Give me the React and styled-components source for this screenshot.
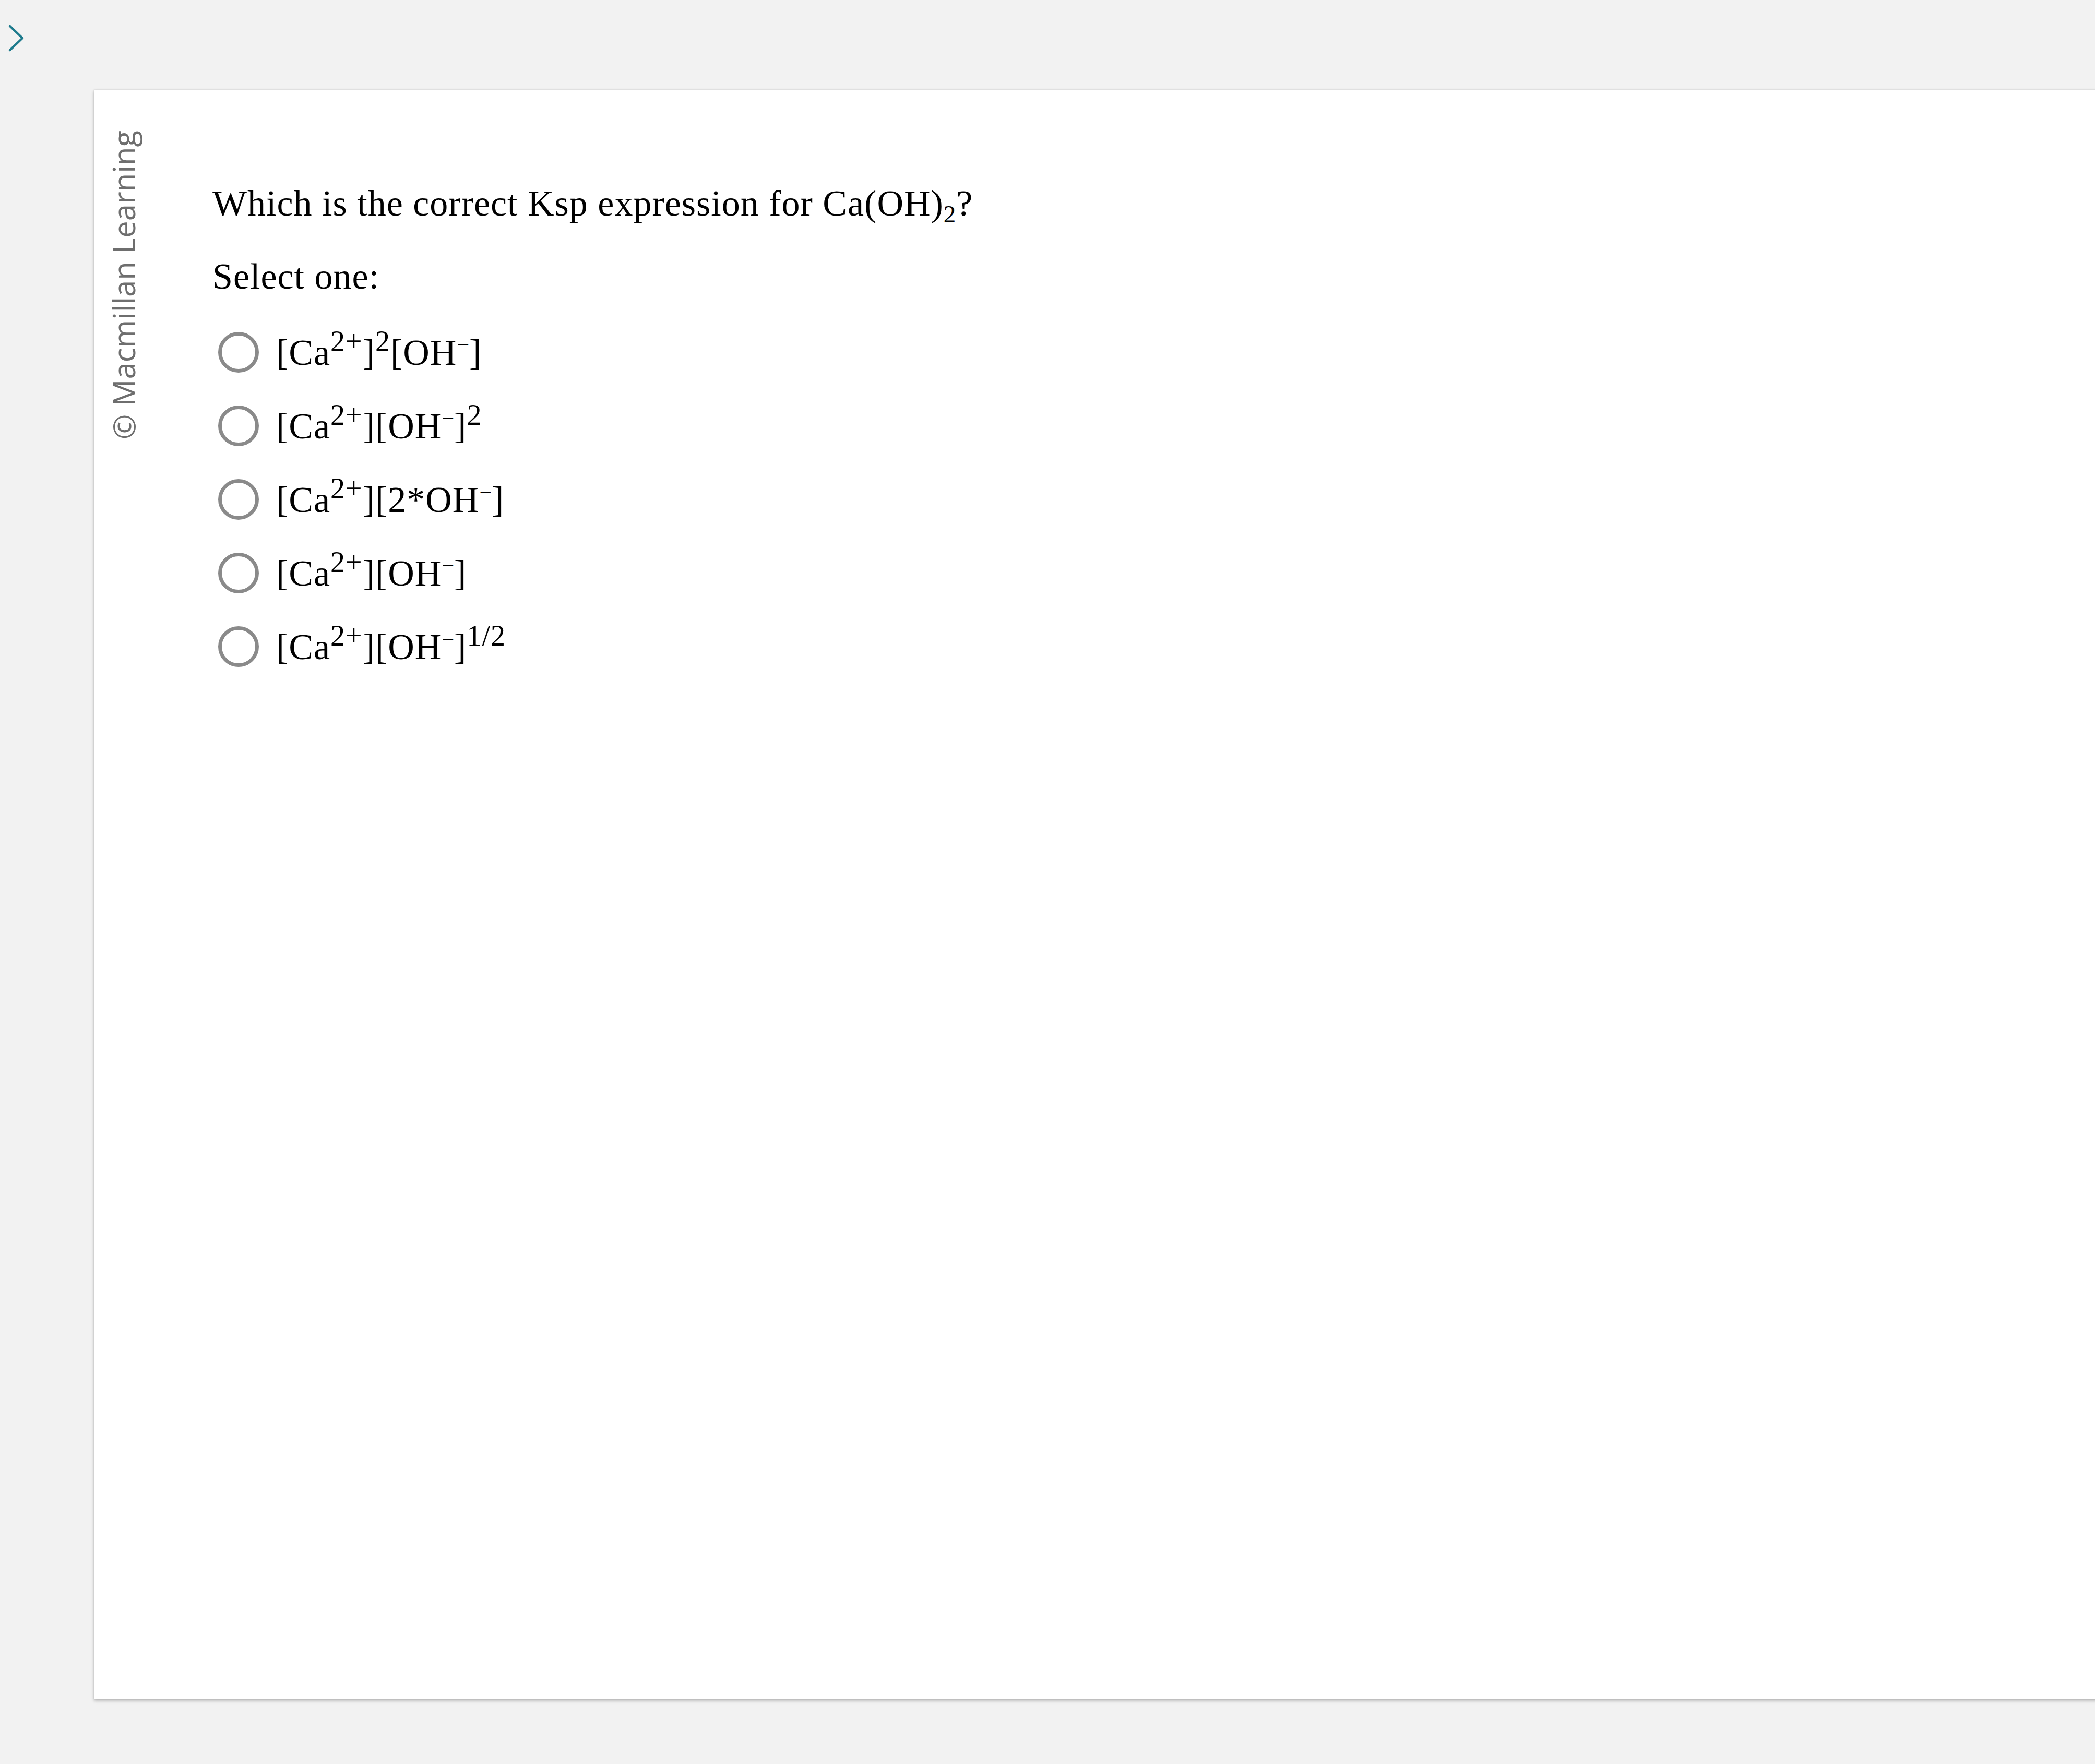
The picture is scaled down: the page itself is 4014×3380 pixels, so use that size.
import React from 'react';
import styled, { createGlobalStyle } from 'styled-components';

const GlobalStyle = createGlobalStyle`
  html, body {
    margin: 0;
    padding: 0;
    background: #f2f2f2;
    overflow: hidden;
  }
`;

const Page = styled.div`
  display: flex;
  flex-direction: column;
  height: 3380px;
`;

const TopBar = styled.header`
  height: 172px;
  box-sizing: border-box;
  padding: 46px 0 0 15px;
`;

const Card = styled.main`
  display: flex;
  margin-left: 180px;
  width: 3900px;
  height: 3084px;
  background: #fff;
  box-shadow: 0 3px 6px rgba(0, 0, 0, 0.22), 0 0 3px rgba(0, 0, 0, 0.12);
`;

const Credit = styled.div`
  align-self: flex-start;
  margin: 78px 0 0 28px;
  writing-mode: vertical-rl;
  text-orientation: sideways;
  transform: rotate(180deg);
  white-space: nowrap;
  font-family: "Open Sans", sans-serif;
  font-size: 58px;
  line-height: 58px;
  color: #6e6e6e;
`;

const Content = styled.section`
  padding: 180px 0 0 141px;
  font-family: "Liberation Serif", "Times New Roman", serif;
  font-size: 70px;
  line-height: 75px;
  letter-spacing: 1px;
  color: #000;
`;

const Prompt = styled.p`
  margin: 0;
`;

const SelectLabel = styled.p`
  margin: 65px 0 0;
`;

const Options = styled.div`
  display: flex;
  flex-direction: column;
  gap: 63px;
  margin-top: 69px;
  padding-left: 11px;
`;

const Option = styled.label`
  display: flex;
  align-items: center;
  gap: 33px;
  cursor: pointer;
`;

const Radio = styled.span`
  flex: none;
  width: 78px;
  height: 78px;
  box-sizing: border-box;
  border: 7px solid #8a8a8a;
  border-radius: 50%;
`;

const Sup = styled.sup`
  font-size: 56px;
  line-height: 0;
  vertical-align: 26px;
`;

const Minus = styled.sup`
  font-size: 42px;
  line-height: 0;
  vertical-align: 24px;
  letter-spacing: 0;
`;

const Sub = styled.sub`
  font-size: 47px;
  line-height: 0;
  vertical-align: -13px;
`;

const Chevron = () => (
  <svg width="32" height="54" viewBox="0 0 32 54">
    <polyline
      points="4,4 28,27 4,50"
      fill="none"
      stroke="#1d7a8c"
      strokeWidth="4.5"
      strokeLinecap="round"
      strokeLinejoin="round"
    />
  </svg>
);

const Ca = () => (
  <>
    [Ca<Sup>2+</Sup>]
  </>
);

const OH = ({ coef }) => (
  <>
    [{coef}OH<Minus>−</Minus>]
  </>
);

const choices = [
  <>
    <Ca />
    <Sup>2</Sup>
    <OH />
  </>,
  <>
    <Ca />
    <OH />
    <Sup>2</Sup>
  </>,
  <>
    <Ca />
    <OH coef="2*" />
  </>,
  <>
    <Ca />
    <OH />
  </>,
  <>
    <Ca />
    <OH />
    <Sup>1/2</Sup>
  </>,
];

export default function App() {
  return (
    <Page>
      <GlobalStyle />
      <TopBar>
        <Chevron />
      </TopBar>
      <Card>
        <Credit>© Macmillan Learning</Credit>
        <Content>
          <Prompt>
            Which is the correct Ksp expression for Ca(OH)<Sub>2</Sub>?
          </Prompt>
          <SelectLabel>Select one:</SelectLabel>
          <Options>
            {choices.map((c, i) => (
              <Option key={i}>
                <Radio />
                <span>{c}</span>
              </Option>
            ))}
          </Options>
        </Content>
      </Card>
    </Page>
  );
}
